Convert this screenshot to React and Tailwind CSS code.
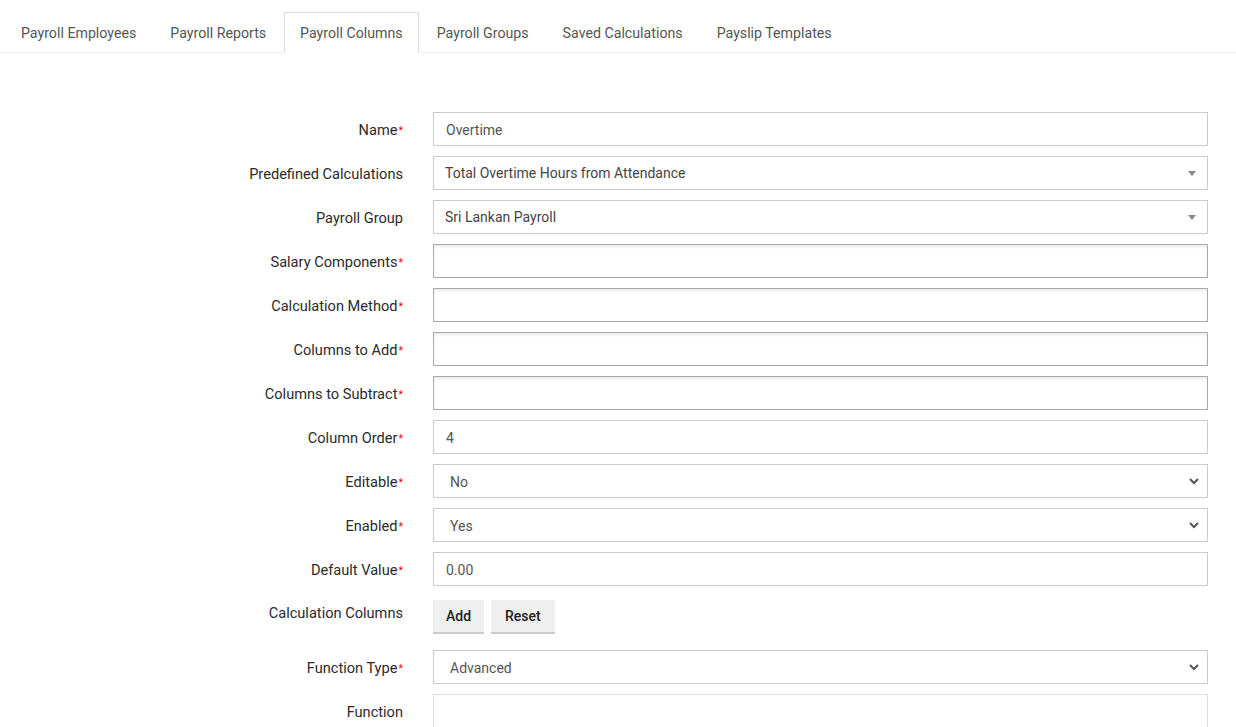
const TABS = [
  'Payroll Employees',
  'Payroll Reports',
  'Payroll Columns',
  'Payroll Groups',
  'Saved Calculations',
  'Payslip Templates',
]

// kind: text | select2 | empty | native
const FIELDS = [
  { label: 'Name', req: true, kind: 'text', value: 'Overtime' },
  { label: 'Predefined Calculations', kind: 'select2', value: 'Total Overtime Hours from Attendance' },
  { label: 'Payroll Group', kind: 'select2', value: 'Sri Lankan Payroll' },
  { label: 'Salary Components', req: true, kind: 'empty' },
  { label: 'Calculation Method', req: true, kind: 'empty' },
  { label: 'Columns to Add', req: true, kind: 'empty' },
  { label: 'Columns to Subtract', req: true, kind: 'empty' },
  { label: 'Column Order', req: true, kind: 'text', value: '4' },
  { label: 'Editable', req: true, kind: 'native', value: 'No' },
  { label: 'Enabled', req: true, kind: 'native', value: 'Yes' },
  { label: 'Default Value', req: true, kind: 'text', value: '0.00' },
]

function Label({ text, req }) {
  return (
    <div className="w-[403px] shrink-0 text-right text-[14.6px] text-[#2b2b2b] pt-[3px]">
      {text}
      {req && <span className="text-[#f00] text-[10.5px] relative -top-[1px] ml-[1px]">*</span>}
    </div>
  )
}

function Field({ f }) {
  if (f.kind === 'empty') {
    return (
      <div className="w-[775px] h-[34px] border border-[#aaa] bg-white shadow-[inset_0_2px_3px_rgba(0,0,0,0.08)]" />
    )
  }
  if (f.kind === 'select2') {
    return (
      <div className="w-[775px] h-[34px] border border-[#ccc] bg-white flex items-center pl-[11px] pr-[11px] text-[14px] text-[#444]">
        <span className="flex-1 pt-[1px]">{f.value}</span>
        <svg width="8" height="5" viewBox="0 0 8 5">
          <path d="M0 0h8L4 5z" fill="#888" />
        </svg>
      </div>
    )
  }
  if (f.kind === 'native') {
    return (
      <div className="w-[775px] h-[34px] border border-[#ccc] bg-white flex items-center pl-[16px] pr-[4px] text-[14px] text-[#555]">
        <span className="flex-1 pt-[2px]">{f.value}</span>
        <svg width="14" height="14" viewBox="0 0 14 14" className="mr-[2px]">
          <path d="M3 5l4 4 4-4" fill="none" stroke="#555" strokeWidth="2" />
        </svg>
      </div>
    )
  }
  return (
    <div className="w-[775px] h-[34px] border border-[#ccc] bg-white flex items-center px-[12px] pt-[2px] text-[14px] text-[#555]">
      {f.value}
    </div>
  )
}

export default function App() {
  return (
    <div className="bg-white min-h-[727px] font-['Roboto',sans-serif]">
      {/* Tabs */}
      <div className="pt-[12px] border-b border-[#eee] flex pl-[5px]">
        {TABS.map((t) => {
          const active = t === 'Payroll Columns'
          return (
            <div
              key={t}
              className={`mr-[2px] -mb-px px-[15px] h-[41px] pt-[2px] flex items-center text-[14.2px] text-[#555] border ${
                active ? 'border-[#ddd] border-b-white bg-white' : 'border-transparent'
              }`}
            >
              {t}
            </div>
          )
        })}
      </div>

      {/* Form */}
      <div className="pt-[59px] flex flex-col gap-[10px]">
        {FIELDS.map((f) => (
          <div key={f.label} className="flex items-center gap-[30px]">
            <Label text={f.label} req={f.req} />
            <Field f={f} />
          </div>
        ))}

        <div className="flex items-start gap-[30px] mt-[4px]">
          <div className="w-[403px] shrink-0 text-right text-[14.6px] text-[#2b2b2b] pt-[3px]">Calculation Columns</div>
          <div className="flex gap-[7px]">
            <button className="h-[34px] px-[13px] bg-[#efefef] border-b-2 border-[#ccc] text-[14px] font-medium text-[#222]">
              Add
            </button>
            <button className="h-[34px] px-[14px] bg-[#efefef] border-b-2 border-[#ccc] text-[14px] font-medium text-[#222]">
              Reset
            </button>
          </div>
        </div>

        <div className="flex items-center gap-[30px] mt-[6px]">
          <Label text="Function Type" req />
          <Field f={{ kind: 'native', value: 'Advanced' }} />
        </div>
        <div className="flex items-start gap-[30px]">
          <div className="w-[403px] shrink-0 text-right text-[14.6px] text-[#2b2b2b] pt-[8px]">Function</div>
          <div className="w-[775px] h-[60px] border border-[#ddd] bg-white" />
        </div>
      </div>
    </div>
  )
}
